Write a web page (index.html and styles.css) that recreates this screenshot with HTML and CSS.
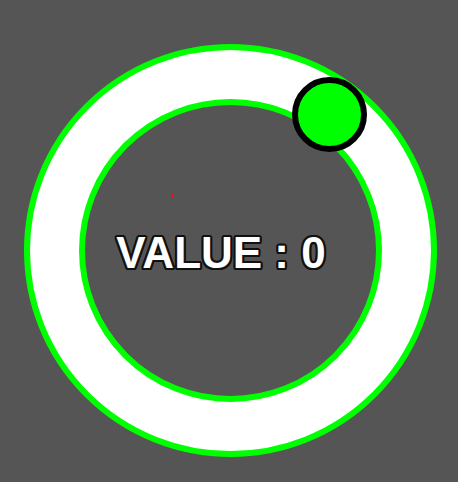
FILE: index.html
```html
<!DOCTYPE html>
<html>
<head>
<meta charset="utf-8">
<link rel="stylesheet" href="styles.css">
</head>
<body>
<div class="stage">
  <div class="ring">
    <div class="hole">
      <span class="value">VALUE : 0</span>
    </div>
  </div>
  <div class="knob"></div>
  <div class="dot"></div>
</div>
</body>
</html>
```
FILE: styles.css
```css
html, body {
  margin: 0;
  padding: 0;
  background: #555555;
}
.stage {
  position: relative;
  width: 458px;
  height: 482px;
  padding: 44px 0 0 24px;
  box-sizing: border-box;
}
.ring {
  width: 413px;
  height: 413px;
  box-sizing: border-box;
  border: 6px solid #00ff00;
  border-radius: 50%;
  background: #ffffff;
  display: flex;
  align-items: center;
  justify-content: center;
}
.hole {
  width: 303px;
  height: 303px;
  box-sizing: border-box;
  border: 6px solid #00ff00;
  border-radius: 50%;
  background: #555555;
  display: flex;
  align-items: center;
  justify-content: center;
}
.value {
  font-family: "Liberation Sans", Arial, sans-serif;
  font-weight: bold;
  font-size: 44px;
  line-height: 1;
  color: #ffffff;
  margin-right: 19px;
  margin-top: 4px;
  white-space: nowrap;
  text-shadow:
    2px 0 0 #111, -2px 0 0 #111, 0 2px 0 #111, 0 -2px 0 #111,
    1.5px 1.5px 0 #111, -1.5px -1.5px 0 #111, 1.5px -1.5px 0 #111, -1.5px 1.5px 0 #111,
    1px 2px 0 #111, -1px 2px 0 #111, 1px -2px 0 #111, -1px -2px 0 #111,
    2px 1px 0 #111, -2px 1px 0 #111, 2px -1px 0 #111, -2px -1px 0 #111;
}
.knob {
  position: absolute;
  left: 292px;
  top: 77px;
  width: 75px;
  height: 75px;
  box-sizing: border-box;
  border: 6px solid #000;
  border-radius: 50%;
  background: #00ff00;
}
.dot {
  position: absolute;
  left: 171px;
  top: 194px;
  width: 3px;
  height: 3px;
  border-radius: 50%;
  background: #ee1111;
}
```
